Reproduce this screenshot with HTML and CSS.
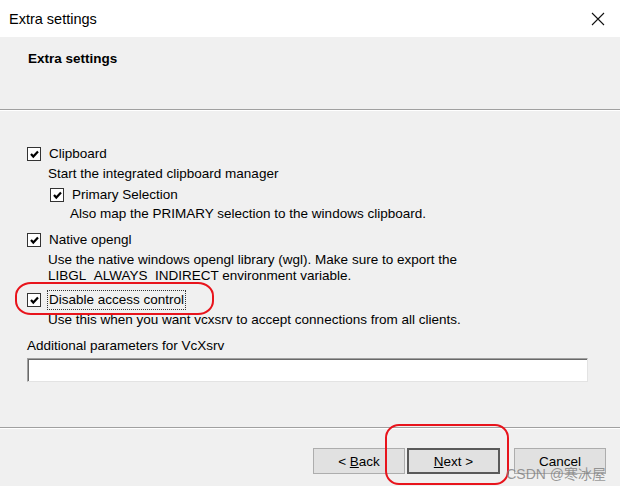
FILE: index.html
```html
<!DOCTYPE html>
<html lang="en">
<head>
    <meta charset="UTF-8">
    <title>Extra settings</title>
    <link rel="stylesheet" href="styles.css">
</head>
<body>
    <div class="dialog">
        <div class="titlebar">
            <span class="title">Extra settings</span>
            <svg class="close" width="14" height="14" viewBox="0 0 14 14">
                <path d="M1 1 L13 13 M13 1 L1 13" stroke="#111" stroke-width="1.1" fill="none"/>
            </svg>
        </div>

        <div class="header">
            <div class="header-title">Extra settings</div>
        </div>
        <div class="separator"></div>

        <div class="content">
            <div class="option">
                <span class="check"><svg viewBox="0 0 11 11"><path d="M2 5 L4.3 7.6 L9 2.6" stroke="#000" stroke-width="2.2" fill="none"/></svg></span>
                <span class="label">Clipboard</span>
            </div>
            <div class="desc desc-1">Start the integrated clipboard manager</div>

            <div class="option option-sub">
                <span class="check"><svg viewBox="0 0 11 11"><path d="M2 5 L4.3 7.6 L9 2.6" stroke="#000" stroke-width="2.2" fill="none"/></svg></span>
                <span class="label">Primary Selection</span>
            </div>
            <div class="desc desc-sub">Also map the PRIMARY selection to the windows clipboard.</div>

            <div class="option option-gap">
                <span class="check"><svg viewBox="0 0 11 11"><path d="M2 5 L4.3 7.6 L9 2.6" stroke="#000" stroke-width="2.2" fill="none"/></svg></span>
                <span class="label">Native opengl</span>
            </div>
            <div class="desc">Use the native windows opengl library (wgl). Make sure to export the<br>LIBGL_ALWAYS_INDIRECT environment variable.</div>

            <div class="option option-focus">
                <span class="check"><svg viewBox="0 0 11 11"><path d="M2 5 L4.3 7.6 L9 2.6" stroke="#000" stroke-width="2.2" fill="none"/></svg></span>
                <span class="label focused">Disable access control</span>
                <span class="mark mark-option"></span>
            </div>
            <div class="desc desc-last">Use this when you want vcxsrv to accept connections from all clients.</div>

            <div class="field-label">Additional parameters for VcXsrv</div>
            <div class="field"></div>
        </div>

        <div class="separator"></div>

        <div class="footer">
            <button class="btn btn-back">&lt; <u>B</u>ack</button>
            <button class="btn btn-next"><u>N</u>ext &gt;<span class="mark mark-next"></span></button>
            <button class="btn btn-cancel">Cancel</button>
            <span class="watermark">CSDN @寒冰屋</span>
        </div>
    </div>
</body>
</html>
```

FILE: styles.css
```css
:root {
    --face: #f0f0f0;
    --shadow: #a0a0a0;
    --mark: #e8141c;
}

* {
    margin: 0;
    padding: 0;
    box-sizing: border-box;
}

body {
    font-family: 'Liberation Sans', Arial, sans-serif;
    font-size: 13.5px;
    line-height: 16px;
    color: #000;
    background: var(--face);
}

.dialog {
    width: 620px;
    height: 486px;
    position: relative;
    overflow: hidden;
}

.titlebar {
    height: 37px;
    background: #fff;
    display: flex;
    align-items: center;
    justify-content: space-between;
    padding: 0 15px 0 9px;
}

.title {
    font-size: 14.5px;
    color: #000;
}

.header {
    height: 72px;
    padding: 14px 0 0 28px;
}

.header-title {
    font-weight: bold;
}

.separator {
    border-top: 1px solid var(--shadow);
    border-bottom: 1px solid #fff;
}

.content {
    height: 316px;
    padding: 35px 32px 0 27px;
}

.option {
    display: flex;
    align-items: center;
    height: 16px;
    position: relative;
}

.check {
    width: 14px;
    height: 14px;
    background: #fff;
    border: 1px solid #333;
    display: flex;
    align-items: center;
    justify-content: center;
    margin-right: 6px;
}

.check svg {
    width: 11px;
    height: 11px;
}

.label {
    padding: 0 1px;
    border: 1px dotted transparent;
    line-height: 16px;
}

.focused {
    border-color: #333;
    line-height: 18px;
}

.desc {
    padding-left: 21px;
    margin-top: 4px;
}

.option-sub {
    margin: 5px 0 0 23px;
}

.desc-sub {
    padding-left: 43px;
    margin-top: 3px;
}

.option-gap {
    margin-top: 10px;
}

.option-focus {
    margin-top: 8px;
}

.desc-last {
    margin-top: 4px;
}

.field-label {
    margin-top: 10px;
}

.field {
    margin-top: 4px;
    height: 24px;
    background: #fff;
    border: 1px solid;
    border-color: #a0a0a0 #e3e3e3 #e3e3e3 #a0a0a0;
    box-shadow: inset 1px 1px 0 #696969;
}

.footer {
    display: flex;
    justify-content: flex-end;
    padding: 19px 14px 0 0;
    position: relative;
}

.btn {
    width: 92px;
    height: 26px;
    font-family: inherit;
    font-size: 13.5px;
    background: #e1e1e1;
    border: 1px solid #adadad;
    color: #000;
    position: relative;
}

.btn-back {
    margin-right: 2px;
}

.btn-next {
    width: 93px;
    border: 2px solid #5a5a5a;
    margin-right: 14px;
}

.mark {
    position: absolute;
    border: 2px solid var(--mark);
}

.mark-option {
    left: -12px;
    top: -10px;
    width: 199px;
    height: 33px;
    border-radius: 16px / 14px;
}

.mark-next {
    left: -24px;
    top: -26px;
    width: 124px;
    height: 61px;
    border-radius: 14px;
}

.watermark {
    position: absolute;
    right: 14px;
    top: 37px;
    font-family: 'Liberation Sans', 'Noto Sans CJK SC', sans-serif;
    font-size: 14px;
    color: rgba(120, 120, 120, 0.75);
}
```
